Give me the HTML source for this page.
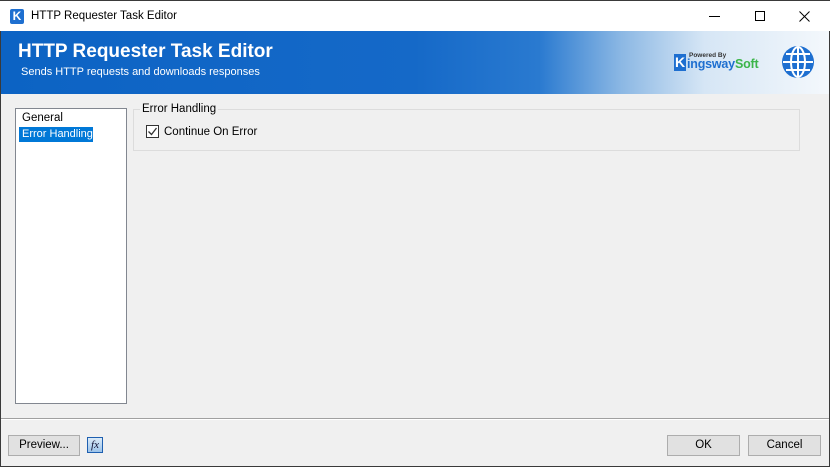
<!DOCTYPE html>
<html><head><style>
*{margin:0;padding:0;box-sizing:border-box}
body{width:830px;height:467px;background:#f0f0f0;font-family:"Liberation Sans",sans-serif;font-size:11.5px;color:#000;position:relative;overflow:hidden}
div{white-space:nowrap}
.win{position:absolute;left:0;top:0;width:830px;height:467px;border:1px solid #3a3a3a;border-top:none}
.title{position:absolute;left:0;top:0;width:830px;height:31px;background:#fff;border-top:1px solid #3a3a3a}
.hdr{position:absolute;left:1px;top:31px;width:828px;height:63px;background:linear-gradient(90deg,#0c63c4 0%,#1569c8 50%,#2a7ad0 65%,#8cb8e4 75%,#d6e6f5 85%,#f4f8fc 100%)}
.a{position:absolute}
.btn{position:absolute;height:21px;background:#e1e1e1;border:1px solid #adadad;text-align:center;line-height:19px;font-size:11.5px}
</style></head><body>
<div class="win"></div>
<div class="title">
 <div class="a" style="left:10px;top:8px;width:14px;height:15px;background:#1e6fd0;border-radius:2px;color:#fff;font-weight:bold;font-size:12px;line-height:15px;text-align:center">K</div>
 <div class="a" style="left:31px;top:9px;font-size:11.5px">HTTP Requester Task Editor</div>
 <div class="a" style="left:709px;top:15px;width:11px;height:1px;background:#000"></div>
 <div class="a" style="left:755px;top:10px;width:10px;height:10px;border:1px solid #000"></div>
 <svg class="a" style="left:799px;top:10px" width="11" height="11"><path d="M0.5 0.5 L10.5 10.5 M10.5 0.5 L0.5 10.5" stroke="#000" stroke-width="1"/></svg>
</div>
<div class="hdr">
 <div class="a" style="left:17px;top:10px;color:#fff;font-weight:bold;font-size:19px">HTTP Requester Task Editor</div>
 <div class="a" style="left:20px;top:35px;color:#fff;font-size:11px">Sends HTTP requests and downloads responses</div>
 <div class="a" style="left:673px;top:23px;width:12px;height:17px;background:#1e6fd0;color:#fff;font-weight:bold;font-size:14px;line-height:17px;text-align:center">K</div>
 <div class="a" style="left:688px;top:21px;font-size:6.5px;font-weight:bold;color:#333">Powered By</div>
 <div class="a" style="left:686px;top:26px;font-size:12.5px;font-weight:bold;color:#1e6fd0;letter-spacing:-0.2px">ingsway<span style="color:#3cb54a">Soft</span></div>
 <svg class="a" style="left:780px;top:14px" width="34" height="34" viewBox="0 0 34 34"><circle cx="17" cy="17" r="16" fill="#1e6fd0"/><g fill="none" stroke="#fff" stroke-width="2"><ellipse cx="17" cy="17" rx="7" ry="15"/><line x1="17" y1="2" x2="17" y2="32"/><line x1="2" y1="17" x2="32" y2="17"/><path d="M5 9 H29 M5 25 H29"/></g></svg>
</div>
<div class="a" style="left:15px;top:108px;width:112px;height:296px;background:#fff;border:1px solid #828790"></div>
<div class="a" style="left:22px;top:112px">General</div>
<div class="a" style="left:19px;top:127px;width:74px;height:15px;background:#0078d7;color:#fff;padding-left:3px;line-height:15px;font-size:11px">Error Handling</div>
<div class="a" style="left:133px;top:109px;width:667px;height:42px;border:1px solid #dcdcdc"></div>
<div class="a" style="left:140px;top:103px;background:#f0f0f0;padding:0 2px">Error Handling</div>
<div class="a" style="left:146px;top:125px;width:13px;height:13px;border:1px solid #333;background:#fff"></div>
<svg class="a" style="left:147px;top:126px" width="11" height="11"><path d="M1.5 5.5 L4.5 8.5 L9.5 2" fill="none" stroke="#333" stroke-width="1.3"/></svg>
<div class="a" style="left:164px;top:126px">Continue On Error</div>
<div class="a" style="left:1px;top:418px;width:828px;height:1px;background:#a0a0a0"></div>
<div class="a" style="left:1px;top:419px;width:828px;height:1px;background:#fff"></div>
<div class="btn" style="left:8px;top:435px;width:72px">Preview...</div>
<div class="a" style="left:87px;top:437px;width:16px;height:16px;border:1px solid #1e5fb0;background:linear-gradient(#dbeaf8,#9cc3ea);font-style:italic;font-family:'Liberation Serif',serif;font-size:11px;line-height:14px;text-align:center;color:#113">fx</div>
<div class="btn" style="left:667px;top:435px;width:73px">OK</div>
<div class="btn" style="left:748px;top:435px;width:73px">Cancel</div>
</body></html>
